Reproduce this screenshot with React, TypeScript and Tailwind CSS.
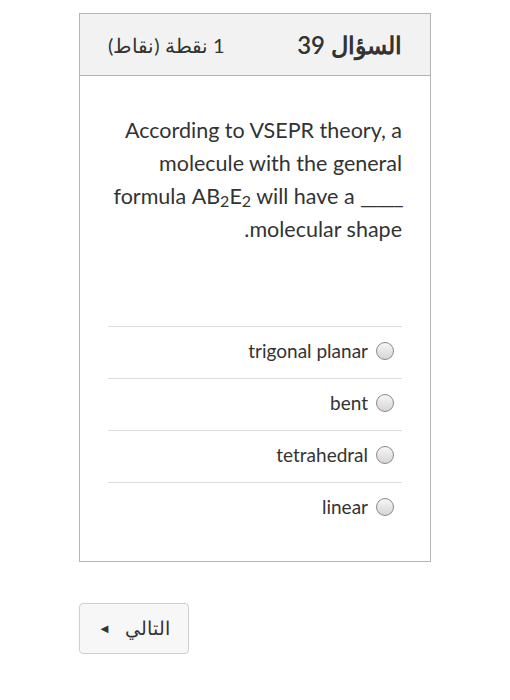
import React from "react";

const options = ["trigonal planar", "bent", "tetrahedral", "linear"];

const Radio = () => (
    <span className="inline-block w-[18px] h-[18px] rounded-full border border-[#8a8a8a] bg-gradient-to-b from-[#f6f6f6] to-[#d6d6d6] shrink-0" />
);

export default function App() {
    return (
        <div className="min-h-[700px] bg-white pt-[13px] font-['Lato','Noto_Sans',sans-serif] text-[#333]" dir="rtl">
            <div className="mx-auto w-[352px] border border-[#b5b5b5]">
                <div className="h-[62px] bg-[#f2f2f2] border-b border-[#b5b5b5] flex items-center justify-between px-[28px]">
                    <span className="text-[24px] font-semibold text-[#333]">السؤال 39</span>
                    <span className="text-[20px] text-[#333]">1 نقطة (نقاط)</span>
                </div>
                <div className="px-[28px] pt-[38px] pb-[27px]">
                    <p className="text-[21.5px] leading-[33px] text-right" dir="rtl">
                        According to VSEPR theory, a molecule with the general formula{" "}
                        <span dir="ltr">
                            AB<span className="text-[16px] leading-none align-[-3px]">2</span>E<span className="text-[16px] leading-none align-[-3px]">2</span>
                        </span>{" "}
                        will have a <span className="tracking-[-1.5px]">_____</span> molecular shape.
                    </p>
                    <div className="mt-[80px]">
                        {options.map((o) => (
                            <div key={o} className="h-[52px] border-t border-[#dcdcdc] flex items-center gap-[8px] pr-[8px] pb-[3px]">
                                <Radio />
                                <span className="text-[19px] text-[#333]">{o}</span>
                            </div>
                        ))}
                    </div>
                </div>
            </div>
            <div className="w-[352px] mx-auto mt-[41px] flex justify-end">
                <button className="w-[110px] h-[51px] rounded-[4px] border border-[#cfcfcf] bg-[#f7f7f7] flex items-center justify-center gap-[14px] text-[19px] text-[#333]">
                    <span>التالي</span>
                    <span className="text-[13px]">◄</span>
                </button>
            </div>
        </div>
    );
}
